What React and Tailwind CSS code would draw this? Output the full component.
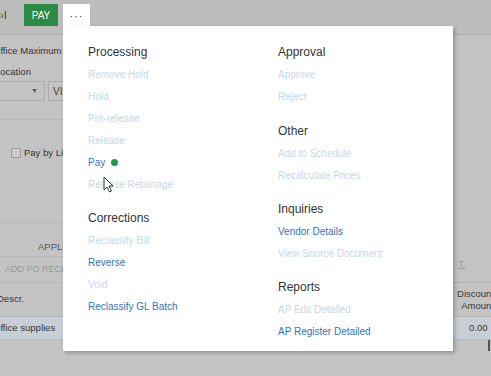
import React from "react";

const Item = ({ children, active, dot }) => (
  <div
    className={`h-[22px] flex items-center text-[10px] ${
      active ? "text-[#2f74bd]" : "text-[#c7d7e8]"
    }`}
  >
    {children}
    {dot && <span className="ml-[6px] w-[7px] h-[7px] rounded-full bg-[#1f9a4b]" />}
  </div>
);

const Header = ({ children, className = "" }) => (
  <div className={`h-[22px] flex items-center text-[12px] text-[#333333] ${className}`}>
    {children}
  </div>
);

export default function App() {
  return (
    <div
      className="relative w-[491px] h-[376px] overflow-hidden bg-[#c3c3c3] text-[#3a3a3a]"
      style={{ fontFamily: '"Liberation Sans", Arial, sans-serif' }}
    >
      {/* Toolbar */}
      <div className="h-[35px] bg-[#bdbdbd] border-b border-[#adadad] flex items-start pt-[4px]">
        <div className="w-[24px] h-[22px] flex items-center text-[11px] text-[#444]">›I</div>
        <div className="w-[34px] h-[22px] bg-[#2b8a44] text-white text-[10px] flex items-center justify-center">
          PAY
        </div>
      </div>

      {/* Page body */}
      <div className="flex">
        {/* Left column (mostly hidden) */}
        <div className="w-[63px] shrink-0 flex flex-col text-[9.5px] text-[#333]">
          <div className="h-[13px] mt-[9px] -ml-[7px] whitespace-nowrap">Office Maximum</div>
          <div className="h-[13px] mt-[8px] -ml-[5px] whitespace-nowrap">Location</div>
          <div className="flex mt-[3px] h-[20px]">
            <div className="w-[45px] h-[20px] border border-[#acacac] border-l-0 flex items-center justify-end pr-[6px] text-[7px] text-[#555]">
              ▼
            </div>
            <div className="ml-[3px] flex-1 h-[20px] border border-[#acacac] border-r-0 flex items-center pl-[4px] text-[10px] text-[#444]">
              VI
            </div>
          </div>
          <div className="mt-[18px] border-t border-[#b6b6b6]" />
          <div className="mt-[27px] flex items-center h-[12px] whitespace-nowrap">
            <span className="ml-[11px] block shrink-0 w-[10px] h-[10px] border border-[#9c9c9c] bg-[#cacaca] rounded-[1px]" />
            <span className="ml-[3px]">Pay by Line</span>
          </div>
          <div className="mt-[63px] border-t border-[#b6b6b6]" />
          <div className="mt-[17px] pl-[38px] text-[9.5px] text-[#555] whitespace-nowrap h-[12px]">APPLICATIONS</div>
          <div className="mt-[4px] border-t border-[#b6b6b6]" />
          <div className="h-[26px] flex items-center pl-[5px] text-[9px] text-[#9a9a9a] whitespace-nowrap border-b border-[#b6b6b6]">
            ADD PO RECEIPT
          </div>
          <div className="h-[34px] flex items-start pt-[9px] -ml-[3px] border-b border-[#b6b6b6]">Descr.</div>
          <div className="h-[23px] bg-[#c9ced5] flex items-center -ml-[7px] whitespace-nowrap border-b border-[#b8bcc2]">
            Office supplies
          </div>
        </div>

        {/* Middle area covered by menu */}
        <div className="w-[390px] shrink-0" />

        {/* Right column */}
        <div className="flex-1 flex flex-col text-[9.5px] text-[#3a3a3a] overflow-hidden">
          <div className="h-[212px]" />
          <div className="h-[36px] flex items-center pl-[5px] text-[#9a9a9a] border-b border-[#b0b0b0]">
            <span className="underline">T.</span>
          </div>
          <div className="h-[34px] flex flex-col justify-center items-end text-right leading-[12px] -mr-[3px] border-b border-[#b6b6b6]">
            <span className="whitespace-nowrap">Discount</span>
            <span className="whitespace-nowrap">Amount</span>
          </div>
          <div className="h-[23px] bg-[#c9ced5] flex items-center pl-[16px] border-b border-[#b8bcc2]">0.00</div>
          <div className="flex-1 flex justify-end items-end">
            <div className="w-[2px] h-[11px] bg-[#555] mr-[1px]" />
          </div>
        </div>
      </div>

      {/* "..." tab */}
      <div className="absolute left-[63px] top-[4px] w-[27px] h-[24px] bg-white flex items-center justify-center text-[11px] text-[#333] tracking-[1px]">
        ···
      </div>

      {/* Dropdown menu */}
      <div className="absolute left-[63px] top-[26px] w-[390px] h-[325px] bg-white shadow-[2px_2px_4px_rgba(0,0,0,0.25)] flex pt-[15px]">
        <div className="w-[215px] pl-[25px] flex flex-col">
          <Header>Processing</Header>
          <Item>Remove Hold</Item>
          <Item>Hold</Item>
          <Item>Pre-release</Item>
          <Item>Release</Item>
          <Item active dot>Pay</Item>
          <Item>Release Retainage</Item>
          <Header className="mt-[12px]">Corrections</Header>
          <Item>Reclassify Bill</Item>
          <Item active>Reverse</Item>
          <Item>Void</Item>
          <Item active>Reclassify GL Batch</Item>
        </div>
        <div className="flex-1 flex flex-col">
          <Header>Approval</Header>
          <Item>Approve</Item>
          <Item>Reject</Item>
          <Header className="mt-[13px]">Other</Header>
          <Item>Add to Schedule</Item>
          <Item>Recalculate Prices</Item>
          <Header className="mt-[12px]">Inquiries</Header>
          <Item active>Vendor Details</Item>
          <Item>View Source Document</Item>
          <Header className="mt-[12px]">Reports</Header>
          <Item>AP Edit Detailed</Item>
          <Item active>AP Register Detailed</Item>
        </div>
      </div>

      {/* Mouse cursor */}
      <svg className="absolute left-[103px] top-[176px]" width="11" height="17" viewBox="0 0 11 17">
        <path d="M1 1 L1 14 L4 11 L6.5 16 L8.5 15 L6 10 L10 10 Z" fill="white" stroke="#333" strokeWidth="1" strokeLinejoin="round" />
      </svg>
    </div>
  );
}
